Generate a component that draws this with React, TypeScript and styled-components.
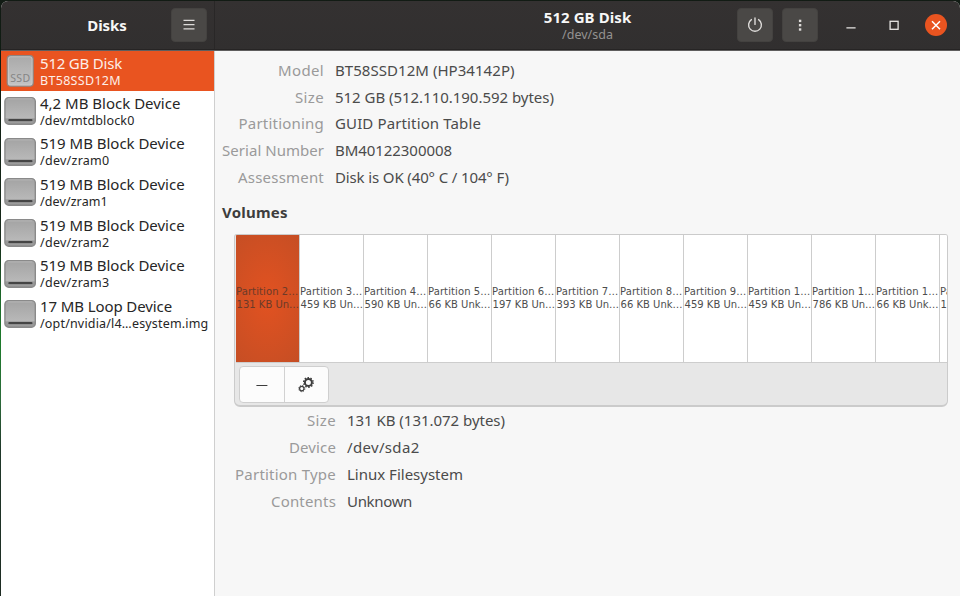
import React from "react";
import styled, { createGlobalStyle } from "styled-components";

const GlobalStyle = createGlobalStyle`
  *, *::before, *::after { box-sizing: border-box; }
  html, body { margin: 0; padding: 0; overflow: hidden; }
  body {
    background: #1b2a1c;
    font-family: "Noto Sans", "Open Sans", sans-serif;
    font-size: 15px;
    color: #4b4b4b;
  }
  button { font: inherit; padding: 0; margin: 0; }
`;

const Desktop = styled.div`
  width: 960px;
  height: 596px;
  padding: 1px 0 0 1px;
  display: flex;
  background: linear-gradient(#121b14 0, #0f1c12 50px, #16291a 240px, #1d6b2a 300px, #1d7a2b 345px, #2c6a3a 400px, #20382a 450px, #1d2b22 100%);
`;

const Window = styled.div`
  flex: 1;
  display: flex;
  flex-direction: column;
  overflow: hidden;
  border-radius: 7px 7px 0 0;
  background: #f7f7f7;
`;

const HeaderBar = styled.header`
  flex: none;
  height: 50px;
  display: flex;
  padding-bottom: 1px;
  background: linear-gradient(#343131, #312f2f);
  border-bottom: 1px solid #5f5e5e;
  box-shadow: inset 0 -1px 0 #262424;
  color: #f7f7f7;
`;

const HeaderLeft = styled.div`
  width: 214px;
  display: grid;
  grid-template-columns: 1fr 36px;
  column-gap: 7px;
  align-items: center;
  padding: 0 7px 0 49px;
  border-right: 1px solid #292727;
`;

const HeaderRight = styled.div`
  flex: 1;
  display: flex;
  align-items: center;
`;

const AppTitle = styled.h1`
  margin: 0;
  padding-bottom: 1px;
  text-align: center;
  font-size: 15px;
  line-height: 20px;
  font-weight: 700;
  letter-spacing: -0.1px;
`;

const TitleBlock = styled.div`
  flex: 1;
  padding-left: 223px;
  display: flex;
  flex-direction: column;
  align-items: center;
`;

const DriveTitle = styled.div`
  font-weight: 700;
  line-height: 18px;
  letter-spacing: 0.08px;
`;

const DriveSubtitle = styled.div`
  font-size: 12.5px;
  line-height: 17px;
  color: #949291;
`;

const HeaderButton = styled.button`
  width: 36px;
  height: 34px;
  border: 1px solid #444240;
  border-radius: 4px;
  background: #4a4846;
  display: grid;
  place-items: center;
  color: #dedcda;
`;

const HeaderActions = styled.div`
  display: flex;
  gap: 9px;
`;

const WindowControls = styled.div`
  display: flex;
  align-items: center;
  justify-content: space-between;
  width: 107px;
  margin: 0 13px 0 22px;
`;

const ControlButton = styled.button<{ $close?: boolean }>`
  width: 22px;
  height: 22px;
  border: 0;
  border-radius: 50%;
  display: grid;
  place-items: center;
  background: ${(p) => (p.$close ? "#e95420" : "transparent")};
`;

const Body = styled.div`
  flex: 1;
  display: flex;
  min-height: 0;
`;

const Sidebar = styled.nav`
  flex: none;
  width: 214px;
  background: #fff;
  border-right: 1px solid #cfcfcf;
`;

const DriveRow = styled.div<{ $selected?: boolean }>`
  height: ${(p) => (p.$selected ? 40 : 40.6)}px;
  display: grid;
  grid-template-columns: 34px 1fr;
  column-gap: 3px;
  align-items: center;
  padding: 0 0 0 2px;
  background: ${(p) => (p.$selected ? "#e95420" : "transparent")};
  color: ${(p) => (p.$selected ? "#fdeee8" : "#262626")};
  svg { display: block; }
`;

const DriveText = styled.div`
  white-space: nowrap;
`;

const DriveName = styled.div<{ $tracking: number }>`
  line-height: 18px;
  letter-spacing: ${(p) => p.$tracking}px;
`;

const DrivePath = styled.div<{ $tracking: number }>`
  font-size: 12.5px;
  line-height: 17px;
  letter-spacing: ${(p) => p.$tracking}px;
`;

const Content = styled.main`
  flex: 1;
  min-width: 0;
  padding: 6px 12px 0 7px;
`;

const Details = styled.dl<{ $labelWidth: number }>`
  margin: 0;
  display: grid;
  grid-template-columns: ${(p) => p.$labelWidth}px 1fr;
  grid-auto-rows: 26.7px;
  column-gap: 11px;
  line-height: 26.7px;
  white-space: nowrap;
`;

const Label = styled.dt<{ $tracking: number }>`
  text-align: right;
  color: #9a9a9a;
  letter-spacing: ${(p) => p.$tracking}px;
`;

const Value = styled.dd<{ $tracking: number }>`
  margin: 0;
  color: #4b4b4b;
  letter-spacing: ${(p) => p.$tracking}px;
`;

const SectionTitle = styled.h2`
  margin: 11px 0 11px;
  font-size: 15px;
  line-height: 22px;
  font-weight: 700;
  letter-spacing: 0.22px;
  color: #3d3d3d;
`;

const VolumeFrame = styled.section`
  margin-left: 12px;
  height: 173px;
  padding-left: 1px;
  border: 1px solid #cbcbcb;
  border-bottom-width: 2px;
  border-radius: 3px 3px 6px 6px;
  background: #e7e7e7;
  overflow: hidden;
`;

const VolumeGrid = styled.div`
  display: flex;
  height: 128px;
  border-bottom: 1px solid #cdcdcd;
  background: #fff;
  overflow: hidden;
`;

const Volume = styled.div<{ $selected?: boolean }>`
  flex: none;
  width: 64px;
  padding-bottom: 2px;
  border-right: 1px solid #cdcdcd;
  display: flex;
  flex-direction: column;
  justify-content: center;
  background: ${(p) => (p.$selected ? "radial-gradient(ellipse 52px 82px at center, #e25221 0%, #c54e24 100%)" : "#fff")};
  color: ${(p) => (p.$selected ? "#6b3a29" : "#4d4d4d")};
  font-family: "DejaVu Sans", sans-serif;
  font-size: 10px;
  line-height: 13px;
  white-space: nowrap;
`;

const VolumeLine = styled.span<{ $inset?: boolean }>`
  padding-left: ${(p) => (p.$inset ? 0.6 : 0)}px;
  letter-spacing: ${(p) => (p.$inset ? 0 : 0.1)}px;
`;

const VolumeToolbar = styled.div`
  display: flex;
  padding: 3px;
`;

const ToolGroup = styled.div`
  display: flex;
  width: 90px;
  height: 37px;
  border: 1px solid #cfcfcf;
  border-radius: 4px;
  background: #fcfcfc;
  overflow: hidden;
`;

const ToolButton = styled.button`
  flex: 1;
  border: 0;
  background: transparent;
  display: grid;
  place-items: center;
  color: #3d3d3d;
  & + & { border-left: 1px solid #d2d2d2; }
`;

const SsdIcon = () => (
  <svg width="34" height="36" viewBox="0 0 34 36">
    <defs>
      <linearGradient id="ssd" x1="0" y1="0" x2="0" y2="1">
        <stop offset="0" stopColor="#a9a9a9" />
        <stop offset="1" stopColor="#c4c4c4" />
      </linearGradient>
    </defs>
    <rect x="4.2" y="2.6" width="26" height="30.6" rx="3.2" fill="url(#ssd)" stroke="#8d8480" strokeWidth="1.2" />
    <rect x="5.4" y="3.8" width="23.6" height="28.2" rx="2.2" fill="none" stroke="#d0d0d0" strokeOpacity=".7" strokeWidth=".9" />
    <text x="17.2" y="29.3" textAnchor="middle" fontFamily="Noto Sans, sans-serif" fontSize="10.5" fill="#858585" textLength="20">SSD</text>
  </svg>
);

const DriveIcon = () => (
  <svg width="34" height="36" viewBox="0 0 34 36">
    <defs>
      <linearGradient id="drive" x1="0" y1="0" x2="0" y2="1">
        <stop offset="0" stopColor="#a3a3a3" />
        <stop offset=".76" stopColor="#b8b8b8" />
        <stop offset=".8" stopColor="#999" />
        <stop offset="1" stopColor="#959595" />
      </linearGradient>
    </defs>
    <rect x="1.9" y="4.6" width="30.4" height="26.6" rx="3.8" fill="url(#drive)" stroke="#8a8a8a" strokeWidth="1.4" />
    <path d="M4.8 5.9h24.6" stroke="#bdbdbd" strokeWidth=".8" />
    <path d="M6.4 27.2h22" stroke="#454545" strokeWidth="2.2" strokeLinecap="round" />
    <path d="M5.4 29h24" stroke="#aaa" strokeWidth=".7" />
  </svg>
);

const MenuIcon = () => (
  <svg width="16" height="16" viewBox="0 0 16 16" stroke="currentColor" strokeWidth="1.2">
    <path d="M2.5 3.4h11M2.5 7.6h11M2.5 11.8h11" />
  </svg>
);

const PowerIcon = () => (
  <svg width="18" height="18" viewBox="0 0 18 18" fill="none" stroke="currentColor" strokeWidth="1.4" strokeLinecap="round">
    <path d="M9 2v6.4M5.4 3.6a6.4 6.4 0 1 0 7.2 0" />
  </svg>
);

const KebabIcon = () => (
  <svg width="16" height="16" viewBox="0 0 16 16" fill="currentColor">
    <rect x="6.9" y="2.7" width="2.4" height="2.4" />
    <rect x="6.9" y="7" width="2.4" height="2.4" />
    <rect x="6.9" y="11.3" width="2.4" height="2.4" />
  </svg>
);

const MinimizeIcon = () => (
  <svg width="12" height="12" viewBox="0 0 12 12"><path d="M1.4 8.8h9.2" stroke="#e8e6e4" strokeWidth="1.3" /></svg>
);
const MaximizeIcon = () => (
  <svg width="12" height="12" viewBox="0 0 12 12"><rect x="2.1" y="2.3" width="8" height="8" fill="none" stroke="#e8e6e4" strokeWidth="1.3" /></svg>
);
const CloseIcon = () => (
  <svg width="12" height="12" viewBox="0 0 12 12"><path d="M2 2.2l8 8M10 2.2l-8 8" stroke="#fff" strokeWidth="1.5" /></svg>
);

const MinusIcon = () => (
  <svg width="16" height="16" viewBox="0 0 16 16"><path d="M2.4 8.5h11" stroke="currentColor" strokeWidth="1.2" /></svg>
);

const GearsIcon = () => (
  <svg width="18" height="18" viewBox="0 0 18 18" fill="none" stroke="currentColor">
    <circle cx="11.4" cy="6.4" r="3.5" strokeWidth="2" />
    <circle cx="11.4" cy="6.4" r="4.8" strokeWidth="1.4" strokeDasharray="1.508 1.508" />
    <circle cx="4.8" cy="12.6" r="2.2" strokeWidth="1.2" />
    <circle cx="4.8" cy="12.6" r="3.1" strokeWidth=".9" strokeDasharray="1.217 1.217" />
  </svg>
);

type Row = [text: string, tracking: number, detail: string, detailTracking: number];

const drives: Row[] = [
  ["512 GB Disk", -0.2, "BT58SSD12M", 0.31],
  ["4,2 MB Block Device", 0, "/dev/mtdblock0", 0.15],
  ["519 MB Block Device", -0.02, "/dev/zram0", 0.27],
  ["519 MB Block Device", -0.02, "/dev/zram1", 0.1],
  ["519 MB Block Device", -0.02, "/dev/zram2", 0.27],
  ["519 MB Block Device", -0.02, "/dev/zram3", 0.27],
  ["17 MB Loop Device", -0.1, "/opt/nvidia/l4…esystem.img", 0.18],
];

const driveDetails: Row[] = [
  ["Model", 0.35, "BT58SSD12M (HP34142P)", 0.05],
  ["Size", 0.35, "512 GB (512.110.190.592 bytes)", -0.03],
  ["Partitioning", 0.21, "GUID Partition Table", 0.13],
  ["Serial Number", 0.04, "BM40122300008", -0.06],
  ["Assessment", 0.2, "Disk is OK (40° C / 104° F)", -0.13],
];

const volumeDetails: Row[] = [
  ["Size", 0.35, "131 KB (131.072 bytes)", -0.03],
  ["Device", 0.12, "/dev/sda2", 0.33],
  ["Partition Type", 0.22, "Linux Filesystem", 0],
  ["Contents", 0.18, "Unknown", -0.33],
];

const volumes: [string, string][] = [
  ["Partition 2…", "131 KB Un…"],
  ["Partition 3…", "459 KB Un…"],
  ["Partition 4…", "590 KB Un…"],
  ["Partition 5…", "66 KB Unk…"],
  ["Partition 6…", "197 KB Un…"],
  ["Partition 7…", "393 KB Un…"],
  ["Partition 8…", "66 KB Unk…"],
  ["Partition 9…", "459 KB Un…"],
  ["Partition 1…", "459 KB Un…"],
  ["Partition 1…", "786 KB Un…"],
  ["Partition 1…", "66 KB Unk…"],
  ["Pa", "1"],
];

const DetailList = ({ rows, labelWidth }: { rows: Row[]; labelWidth: number }) => (
  <Details $labelWidth={labelWidth}>
    {rows.map(([label, lt, value, vt]) => (
      <React.Fragment key={label}>
        <Label $tracking={lt}>{label}</Label>
        <Value $tracking={vt}>{value}</Value>
      </React.Fragment>
    ))}
  </Details>
);

export default function App() {
  return (
    <>
      <GlobalStyle />
      <Desktop>
        <Window>
          <HeaderBar>
            <HeaderLeft>
              <AppTitle>Disks</AppTitle>
              <HeaderButton aria-label="Menu"><MenuIcon /></HeaderButton>
            </HeaderLeft>
            <HeaderRight>
              <TitleBlock>
                <DriveTitle>512 GB Disk</DriveTitle>
                <DriveSubtitle>/dev/sda</DriveSubtitle>
              </TitleBlock>
              <HeaderActions>
                <HeaderButton aria-label="Power off"><PowerIcon /></HeaderButton>
                <HeaderButton aria-label="Drive options"><KebabIcon /></HeaderButton>
              </HeaderActions>
              <WindowControls>
                <ControlButton aria-label="Minimize"><MinimizeIcon /></ControlButton>
                <ControlButton aria-label="Maximize"><MaximizeIcon /></ControlButton>
                <ControlButton $close aria-label="Close"><CloseIcon /></ControlButton>
              </WindowControls>
            </HeaderRight>
          </HeaderBar>
          <Body>
            <Sidebar>
              {drives.map(([name, nt, path, pt], i) => (
                <DriveRow key={path} $selected={i === 0}>
                  {i === 0 ? <SsdIcon /> : <DriveIcon />}
                  <DriveText>
                    <DriveName $tracking={nt}>{name}</DriveName>
                    <DrivePath $tracking={pt}>{path}</DrivePath>
                  </DriveText>
                </DriveRow>
              ))}
            </Sidebar>
            <Content>
              <DetailList rows={driveDetails} labelWidth={102} />
              <SectionTitle>Volumes</SectionTitle>
              <VolumeFrame>
                <VolumeGrid>
                  {volumes.map(([name, size], i) => (
                    <Volume key={i} $selected={i === 0}>
                      <VolumeLine>{name}</VolumeLine>
                      <VolumeLine $inset>{size}</VolumeLine>
                    </Volume>
                  ))}
                </VolumeGrid>
                <VolumeToolbar>
                  <ToolGroup>
                    <ToolButton aria-label="Delete partition"><MinusIcon /></ToolButton>
                    <ToolButton aria-label="Partition options"><GearsIcon /></ToolButton>
                  </ToolGroup>
                </VolumeToolbar>
              </VolumeFrame>
              <DetailList rows={volumeDetails} labelWidth={114} />
            </Content>
          </Body>
        </Window>
      </Desktop>
    </>
  );
}
